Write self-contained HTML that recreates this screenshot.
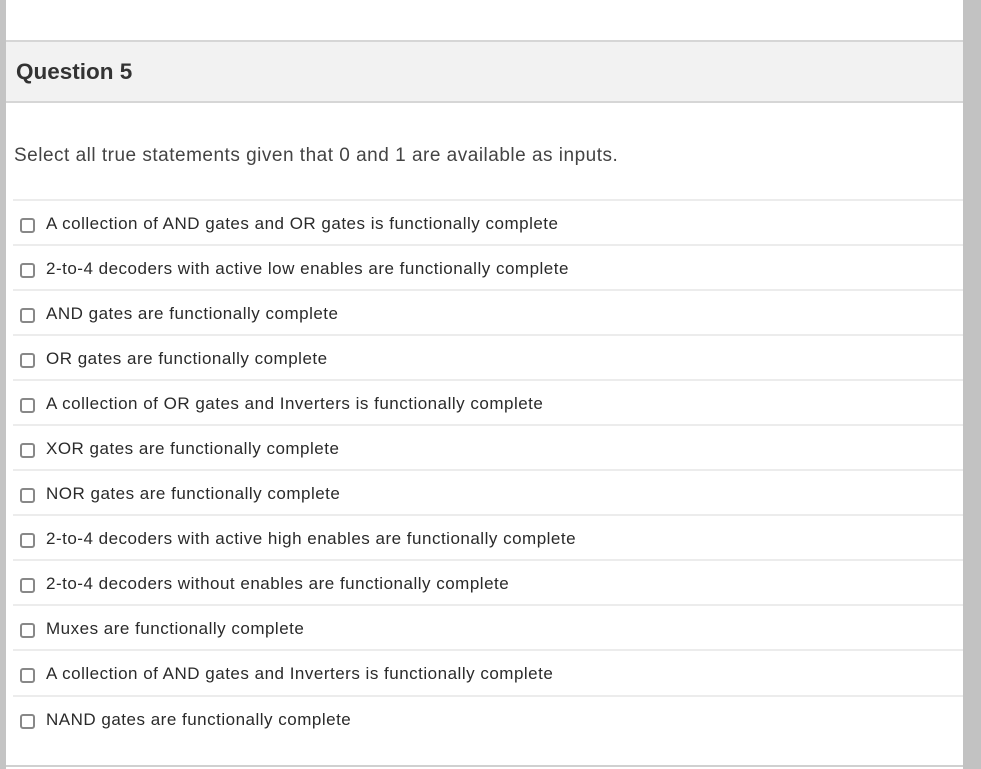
<!DOCTYPE html>
<html><head><style>
body{margin:0;width:981px;height:769px;background:#fff;position:relative;overflow:hidden;font-family:"Liberation Sans",sans-serif;color:#3a3a3a}
.lb{position:absolute;left:0;top:0;width:6px;height:769px;background:#c4c4c4}
.rb{position:absolute;left:963px;top:0;width:18px;height:769px;background:#c2c2c2}
.hd{position:absolute;left:6px;top:40px;width:957px;height:59px;background:#f2f2f2;border-top:2px solid #d6d6d6;border-bottom:2px solid #d6d6d6}
.hd span{position:absolute;left:10px;top:17px;font-size:22.5px;font-weight:bold;color:#333}
.q{position:absolute;left:14px;top:145px;font-size:19px;letter-spacing:.5px;color:#444}
.row{position:absolute;left:13px;width:950px;height:45px;border-top:2px solid #ececec}
.cb{position:absolute;left:7px;top:17px;width:11px;height:11px;border:2px solid #888;border-radius:3px}
.t{position:absolute;left:33px;top:13px;font-size:17px;letter-spacing:.5px;color:#2a2a2a}
.bot{position:absolute;left:6px;top:765px;width:957px;height:2px;background:#d0d0d0}
</style></head><body>
<div class="lb"></div><div class="rb"></div>
<div class="hd"><span>Question 5</span></div>
<div class="q">Select all true statements given that 0 and 1 are available as inputs.</div>
<div class="row" style="top:199px"><div class="cb"></div><div class="t">A collection of AND gates and OR gates is functionally complete</div></div>
<div class="row" style="top:244px"><div class="cb"></div><div class="t">2-to-4 decoders with active low enables are functionally complete</div></div>
<div class="row" style="top:289px"><div class="cb"></div><div class="t">AND gates are functionally complete</div></div>
<div class="row" style="top:334px"><div class="cb"></div><div class="t">OR gates are functionally complete</div></div>
<div class="row" style="top:379px"><div class="cb"></div><div class="t">A collection of OR gates and Inverters is functionally complete</div></div>
<div class="row" style="top:424px"><div class="cb"></div><div class="t">XOR gates are functionally complete</div></div>
<div class="row" style="top:469px"><div class="cb"></div><div class="t">NOR gates are functionally complete</div></div>
<div class="row" style="top:514px"><div class="cb"></div><div class="t">2-to-4 decoders with active high enables are functionally complete</div></div>
<div class="row" style="top:559px"><div class="cb"></div><div class="t">2-to-4 decoders without enables are functionally complete</div></div>
<div class="row" style="top:604px"><div class="cb"></div><div class="t">Muxes are functionally complete</div></div>
<div class="row" style="top:649px"><div class="cb"></div><div class="t">A collection of AND gates and Inverters is functionally complete</div></div>
<div class="row" style="top:695px"><div class="cb"></div><div class="t">NAND gates are functionally complete</div></div>
<div class="bot"></div>
</body></html>
